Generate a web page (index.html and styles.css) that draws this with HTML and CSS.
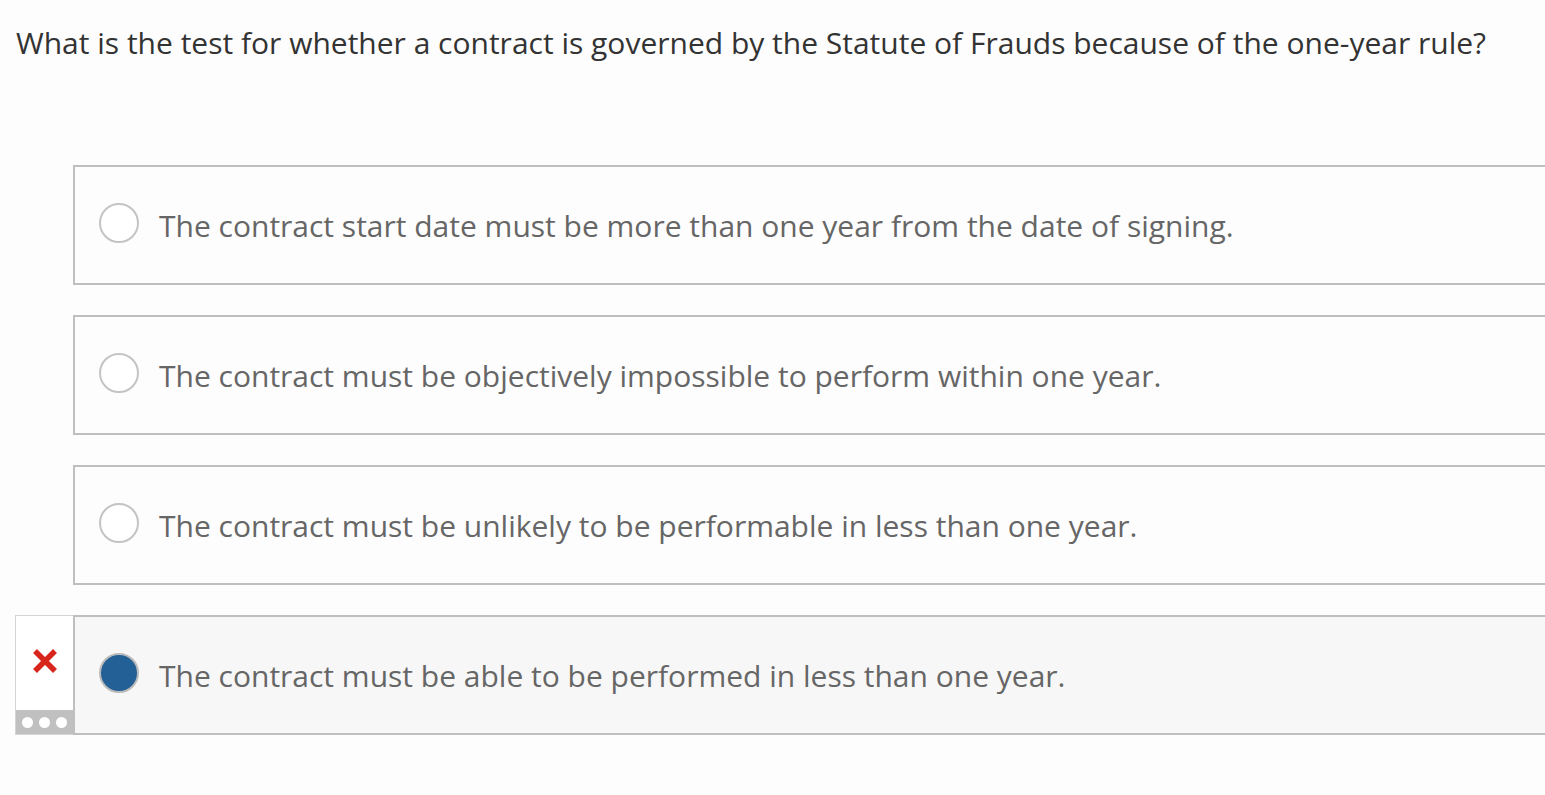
FILE: index.html
```html
<!DOCTYPE html>
<html>
<head>
<meta charset="utf-8">
<link rel="stylesheet" href="styles.css">
</head>
<body>
<div class="page">
  <h1 class="question">What is the test for whether a contract is governed by the Statute of Frauds because of the one-year rule?</h1>
  <div class="options">
    <div class="row">
      <div class="marker-space"></div>
      <div class="option"><span class="radio"></span><span class="label">The contract start date must be more than one year from the date of signing.</span></div>
    </div>
    <div class="row">
      <div class="marker-space"></div>
      <div class="option"><span class="radio"></span><span class="label">The contract must be objectively impossible to perform within one year.</span></div>
    </div>
    <div class="row">
      <div class="marker-space"></div>
      <div class="option"><span class="radio"></span><span class="label">The contract must be unlikely to be performable in less than one year.</span></div>
    </div>
    <div class="row">
      <div class="marker-space marker">
        <div class="mark">
          <svg width="28" height="28" viewBox="0 0 28 28"><path d="M4 4 L24 24 M24 4 L4 24" stroke="#d9261c" stroke-width="5.5" stroke-linecap="butt"/></svg>
        </div>
        <div class="more"><span class="dot"></span><span class="dot"></span><span class="dot"></span></div>
      </div>
      <div class="option selected"><span class="radio checked"></span><span class="label">The contract must be able to be performed in less than one year.</span></div>
    </div>
  </div>
</div>
</body>
</html>
```
FILE: styles.css
```css
html, body {
  margin: 0;
  padding: 0;
  background: #fdfdfd;
}
.page {
  font-family: "Open Sans", "DejaVu Sans", sans-serif;
  width: 1545px;
  height: 795px;
  overflow: hidden;
}
.question {
  margin: 0;
  padding: 23px 0 0 16px;
  font-size: 30px;
  font-weight: 400;
  line-height: 40px;
  color: #333;
  white-space: nowrap;
}
.options {
  display: flex;
  flex-direction: column;
  gap: 30px;
  margin-top: 102px;
  padding-left: 15px;
}
.row {
  display: flex;
  height: 120px;
}
.marker-space {
  width: 58px;
  flex: none;
}
.marker {
  box-sizing: border-box;
  border: 1px solid #d4d4d4;
  border-right: none;
  background: #fff;
  display: flex;
  flex-direction: column;
}
.mark {
  flex: 1;
  display: flex;
  align-items: center;
  justify-content: center;
  padding-bottom: 4px;
}
.more {
  height: 24px;
  background: #c0c0c0;
  display: flex;
  align-items: center;
  justify-content: center;
  gap: 6px;
}
.dot {
  width: 11px;
  height: 11px;
  border-radius: 50%;
  background: #fff;
}
.option {
  flex: 1;
  box-sizing: border-box;
  border: 2px solid #bfbfbf;
  border-right: none;
  background: #fdfdfd;
  display: flex;
  align-items: center;
  padding-left: 24px;
}
.option.selected {
  background: #f7f7f7;
}
.radio {
  box-sizing: border-box;
  width: 40px;
  height: 40px;
  border-radius: 50%;
  border: 2px solid #c4c4c4;
  background: #fff;
  flex: none;
  margin-top: -4px;
}
.radio.checked {
  background: #236095;
  border: 2px solid #bbb;
}
.label {
  margin-left: 20px;
  font-size: 30px;
  color: #666;
  white-space: nowrap;
  margin-top: 0;
}
```
